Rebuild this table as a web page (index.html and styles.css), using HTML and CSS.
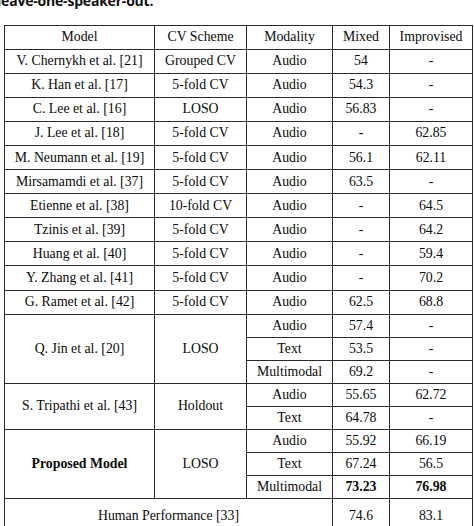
FILE: index.html
```html
<!DOCTYPE html>
<html>
<head>
<meta charset="utf-8">
<link rel="stylesheet" href="styles.css">
</head>
<body>
<div class="caption">leave-one-speaker-out.</div>
<table class="results">
  <colgroup>
    <col class="c-model"><col class="c-cv"><col class="c-mod"><col class="c-mixed"><col class="c-impr">
  </colgroup>
  <tr class="row"><td>Model</td><td>CV Scheme</td><td>Modality</td><td>Mixed</td><td>Improvised</td></tr>
  <tr class="row"><td>V. Chernykh et al. [21]</td><td>Grouped CV</td><td>Audio</td><td>54</td><td>-</td></tr>
  <tr class="row"><td>K. Han et al. [17]</td><td>5-fold CV</td><td>Audio</td><td>54.3</td><td>-</td></tr>
  <tr class="row"><td>C. Lee et al. [16]</td><td>LOSO</td><td>Audio</td><td>56.83</td><td>-</td></tr>
  <tr class="row"><td>J. Lee et al. [18]</td><td>5-fold CV</td><td>Audio</td><td>-</td><td>62.85</td></tr>
  <tr class="row"><td>M. Neumann et al. [19]</td><td>5-fold CV</td><td>Audio</td><td>56.1</td><td>62.11</td></tr>
  <tr class="row"><td>Mirsamamdi et al. [37]</td><td>5-fold CV</td><td>Audio</td><td>63.5</td><td>-</td></tr>
  <tr class="row"><td>Etienne et al. [38]</td><td>10-fold CV</td><td>Audio</td><td>-</td><td>64.5</td></tr>
  <tr class="row"><td>Tzinis et al. [39]</td><td>5-fold CV</td><td>Audio</td><td>-</td><td>64.2</td></tr>
  <tr class="row"><td>Huang et al. [40]</td><td>5-fold CV</td><td>Audio</td><td>-</td><td>59.4</td></tr>
  <tr class="row"><td>Y. Zhang et al. [41]</td><td>5-fold CV</td><td>Audio</td><td>-</td><td>70.2</td></tr>
  <tr class="row"><td>G. Ramet et al. [42]</td><td>5-fold CV</td><td>Audio</td><td>62.5</td><td>68.8</td></tr>
  <tr class="sub"><td rowspan="3">Q. Jin et al. [20]</td><td rowspan="3">LOSO</td><td>Audio</td><td>57.4</td><td>-</td></tr>
  <tr class="sub"><td>Text</td><td>53.5</td><td>-</td></tr>
  <tr class="sub"><td>Multimodal</td><td>69.2</td><td>-</td></tr>
  <tr class="sub"><td rowspan="2">S. Tripathi et al. [43]</td><td rowspan="2">Holdout</td><td>Audio</td><td>55.65</td><td>62.72</td></tr>
  <tr class="sub"><td>Text</td><td>64.78</td><td>-</td></tr>
  <tr class="sub"><td rowspan="3" class="b">Proposed Model</td><td rowspan="3">LOSO</td><td>Audio</td><td>55.92</td><td>66.19</td></tr>
  <tr class="sub"><td>Text</td><td>67.24</td><td>56.5</td></tr>
  <tr class="sub"><td>Multimodal</td><td class="b">73.23</td><td class="b">76.98</td></tr>
  <tr class="last"><td colspan="3">Human Performance [33]</td><td>74.6</td><td>83.1</td></tr>
</table>
</body>
</html>
```
FILE: styles.css
```css
html, body {
  margin: 0;
  padding: 0;
  background: #ffffff;
  overflow: hidden;
}
.caption {
  font-family: "Open Sans", "DejaVu Sans", sans-serif;
  font-weight: 700;
  font-size: 14px;
  line-height: 14px;
  color: #111;
  margin: -6px 0 0 -3px;
  height: 14px;
  letter-spacing: -0.2px;
}
.results {
  margin: 16.5px 0 0 4px;
  border-collapse: collapse;
  table-layout: fixed;
  width: 468px;
  font-family: "Liberation Serif", "Times New Roman", serif;
  font-size: 13.8px;
  color: #0a0a0a;
}
.c-model { width: 150px; }
.c-cv { width: 92px; }
.c-mod { width: 86px; }
.c-mixed { width: 57px; }
.c-impr { width: 83px; }
.results td {
  border: 1px solid #2a2a2a;
  text-align: center;
  vertical-align: middle;
  padding: 0;
  line-height: 16px;
  white-space: nowrap;
}
.row { height: 24.1px; }
.sub { height: 23px; }
.last { height: 36px; }
.b { font-weight: 700; }
```
